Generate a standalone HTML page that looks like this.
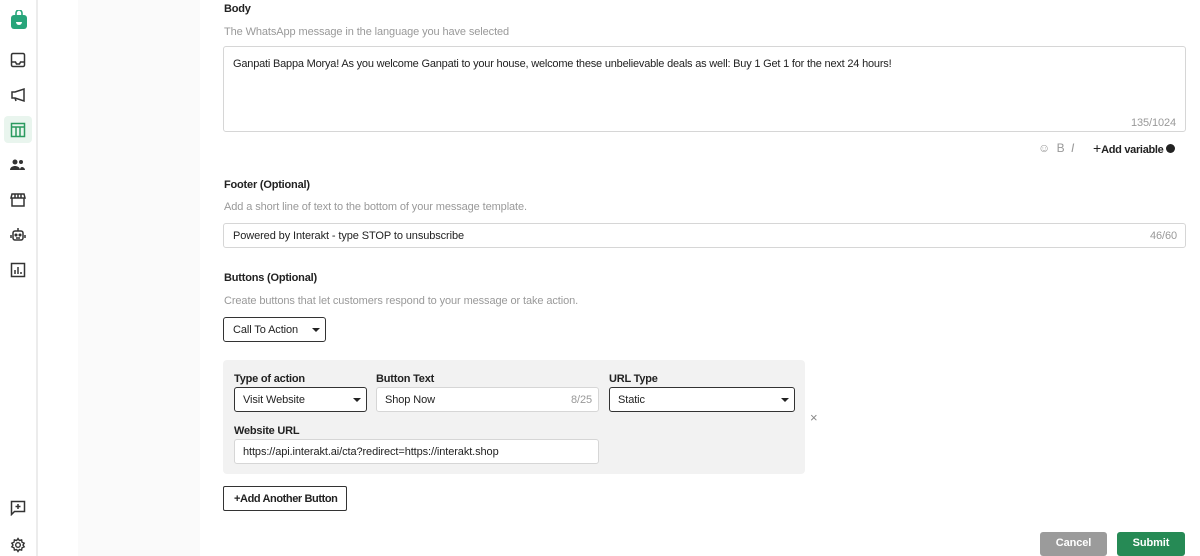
<!DOCTYPE html>
<html><head><style>
*{box-sizing:border-box;margin:0;padding:0}
body{width:1200px;height:556px;overflow:hidden;background:#fff;font-family:"Liberation Sans",sans-serif;font-size:11px;letter-spacing:-0.1px;color:#222;position:relative}
.abs{position:absolute}
.side{left:0;top:0;width:38px;height:556px;background:#fff;border-right:2px solid #ececec}
.gray{left:78px;top:0;width:122px;height:556px;background:#fafafa}
.lbl{font-weight:bold;font-size:11px;color:#222;letter-spacing:-0.2px}
.sub{color:#999;font-size:11px}
.box{border:1px solid #d6d6d6;border-radius:3px;background:#fff}
.sel{border:1px solid #333;border-radius:3px;background:#fff}
.tri{position:absolute;width:0;height:0;border-left:4px solid transparent;border-right:4px solid transparent;border-top:4px solid #222}
.ic{position:absolute;left:10px}
</style></head><body>
<div class="abs side">
 <svg class="ic" style="top:10px" width="18" height="20" viewBox="0 0 18 20"><path d="M6 5V3a3 3 0 0 1 6 0v2" fill="none" stroke="#27a57a" stroke-width="1.6"/><rect x="1" y="5" width="16" height="14" rx="3" fill="#27a57a"/><path d="M6 12h6a3 3 0 0 1-6 0z" fill="#fff"/></svg>
 <svg class="ic" style="top:52px" width="16" height="16" viewBox="0 0 16 16" fill="none" stroke="#333" stroke-width="1.5"><rect x="1.5" y="1.5" width="13" height="13" rx="1.5"/><path d="M1.5 10h4l1 2h3l1-2h4"/></svg>
 <svg class="ic" style="top:87px" width="16" height="16" viewBox="0 0 16 16" fill="none" stroke="#333" stroke-width="1.5"><path d="M14 2v12L5 11H2V5h3z"/><path d="M5 11l1 3"/></svg>
 <div class="abs" style="left:4px;top:116px;width:28px;height:27px;background:#e9f5ee;border-radius:4px"></div>
 <svg class="ic" style="top:122px" width="16" height="16" viewBox="0 0 16 16" fill="none" stroke="#2a9a5f" stroke-width="1.5"><rect x="1.5" y="1.5" width="13" height="13"/><path d="M1.5 5h13M6 5v9.5M10 5v9.5"/></svg>
 <svg class="ic" style="top:158px" width="16" height="14" viewBox="0 0 16 14" fill="#333"><circle cx="5" cy="4" r="2.5"/><circle cx="11" cy="4" r="2"/><path d="M0 12c0-3 3-4 5-4s5 1 5 4zM10 12c0-2 1-3 2-3s3 1 3 3z"/></svg>
 <svg class="ic" style="top:192px" width="16" height="16" viewBox="0 0 16 16" fill="none" stroke="#333" stroke-width="1.5"><path d="M2 2h12l1 4H1z"/><path d="M2 6v8h12V6M5 2v4M8 2v4M11 2v4"/></svg>
 <svg class="ic" style="top:227px" width="16" height="16" viewBox="0 0 16 16" fill="none" stroke="#333" stroke-width="1.5"><rect x="3" y="4" width="10" height="9" rx="2"/><path d="M8 1v3M1 8v3M15 8v3"/><circle cx="6" cy="8" r=".8" fill="#333"/><circle cx="10" cy="8" r=".8" fill="#333"/><path d="M6 11h4"/></svg>
 <svg class="ic" style="top:262px" width="16" height="16" viewBox="0 0 16 16" fill="none" stroke="#333" stroke-width="1.5"><rect x="1.5" y="1.5" width="13" height="13"/><path d="M5 12V8M8 12V5M11 12v-2"/></svg>
 <svg class="ic" style="top:500px" width="16" height="16" viewBox="0 0 16 16" fill="none" stroke="#333" stroke-width="1.5"><path d="M1.5 1.5h13v10h-10l-3 3z"/><path d="M8 4v5M5.5 6.5h5"/></svg>
 <svg class="ic" style="top:537px" width="16" height="16" viewBox="0 0 16 16" fill="none" stroke="#333" stroke-width="1.4"><circle cx="8" cy="8" r="2.3"/><path d="M8 1.5l1.3 2 2.3-.6.4 2.3 2.2 1-1.2 1.8 1.2 1.8-2.2 1-.4 2.3-2.3-.6L8 14.5l-1.3-2-2.3.6-.4-2.3-2.2-1L3 8 1.8 6.2l2.2-1 .4-2.3 2.3.6z"/></svg>
</div>
<div class="abs gray"></div>

<div class="abs lbl" style="left:224px;top:3px">Body</div>
<div class="abs sub" style="left:224px;top:26px">The WhatsApp message in the language you have selected</div>
<div class="abs box" style="left:223px;top:46px;width:963px;height:86px"></div>
<div class="abs" style="left:233px;top:58px;letter-spacing:-0.2px">Ganpati Bappa Morya! As you welcome Ganpati to your house, welcome these unbelievable deals as well: Buy 1 Get 1 for the next 24 hours!</div>
<div class="abs sub" style="left:1131px;top:117px">135/1024</div>
<div class="abs" style="left:1038px;top:141px;color:#999;font-size:12px">☺&nbsp; B&nbsp; <i>I</i></div>
<div class="abs" style="left:1093px;top:140px;font-size:12px"><span style="font-size:14px">+</span><b style="font-size:11px;letter-spacing:-0.3px">Add variable</b><span style="display:inline-block;width:9px;height:9px;border-radius:50%;background:#222;margin-left:2px"></span></div>

<div class="abs lbl" style="left:224px;top:179px">Footer (Optional)</div>
<div class="abs sub" style="left:224px;top:201px">Add a short line of text to the bottom of your message template.</div>
<div class="abs box" style="left:223px;top:223px;width:963px;height:25px"></div>
<div class="abs" style="left:233px;top:230px">Powered by Interakt - type STOP to unsubscribe</div>
<div class="abs sub" style="left:1150px;top:230px">46/60</div>

<div class="abs lbl" style="left:224px;top:272px">Buttons (Optional)</div>
<div class="abs sub" style="left:224px;top:295px">Create buttons that let customers respond to your message or take action.</div>
<div class="abs sel" style="left:223px;top:317px;width:103px;height:25px"><span class="abs" style="left:9px;top:6px">Call To Action</span><div class="tri" style="left:88px;top:10px"></div></div>

<div class="abs" style="left:223px;top:360px;width:582px;height:114px;background:#f2f2f2;border-radius:4px"></div>
<div class="abs lbl" style="left:234px;top:373px">Type of action</div>
<div class="abs lbl" style="left:376px;top:373px">Button Text</div>
<div class="abs lbl" style="left:609px;top:373px">URL Type</div>
<div class="abs sel" style="left:234px;top:387px;width:133px;height:25px"><span class="abs" style="left:8px;top:6px">Visit Website</span><div class="tri" style="left:118px;top:10px"></div></div>
<div class="abs box" style="left:376px;top:387px;width:223px;height:25px"><span class="abs" style="left:8px;top:6px">Shop Now</span><span class="abs sub" style="right:6px;top:6px">8/25</span></div>
<div class="abs sel" style="left:609px;top:387px;width:186px;height:25px"><span class="abs" style="left:8px;top:6px">Static</span><div class="tri" style="left:171px;top:10px"></div></div>
<div class="abs" style="left:810px;top:410px;color:#888;font-size:13px">×</div>
<div class="abs lbl" style="left:234px;top:425px">Website URL</div>
<div class="abs box" style="left:234px;top:439px;width:365px;height:25px"><span class="abs" style="left:8px;top:6px">https://api.interakt.ai/cta?redirect=https://interakt.shop</span></div>

<div class="abs" style="left:223px;top:486px;width:124px;height:25px;border:1px solid #333;border-radius:2px"><span class="abs" style="left:10px;top:6px;font-weight:bold;letter-spacing:-0.4px">+Add Another Button</span></div>

<div class="abs" style="left:1040px;top:532px;width:67px;height:24px;background:#9b9b9b;border-radius:3px;color:#fff;font-weight:bold;text-align:center;line-height:23px">Cancel</div>
<div class="abs" style="left:1117px;top:532px;width:68px;height:24px;background:#268a55;border-radius:3px;color:#fff;font-weight:bold;text-align:center;line-height:23px">Submit</div>
</body></html>
